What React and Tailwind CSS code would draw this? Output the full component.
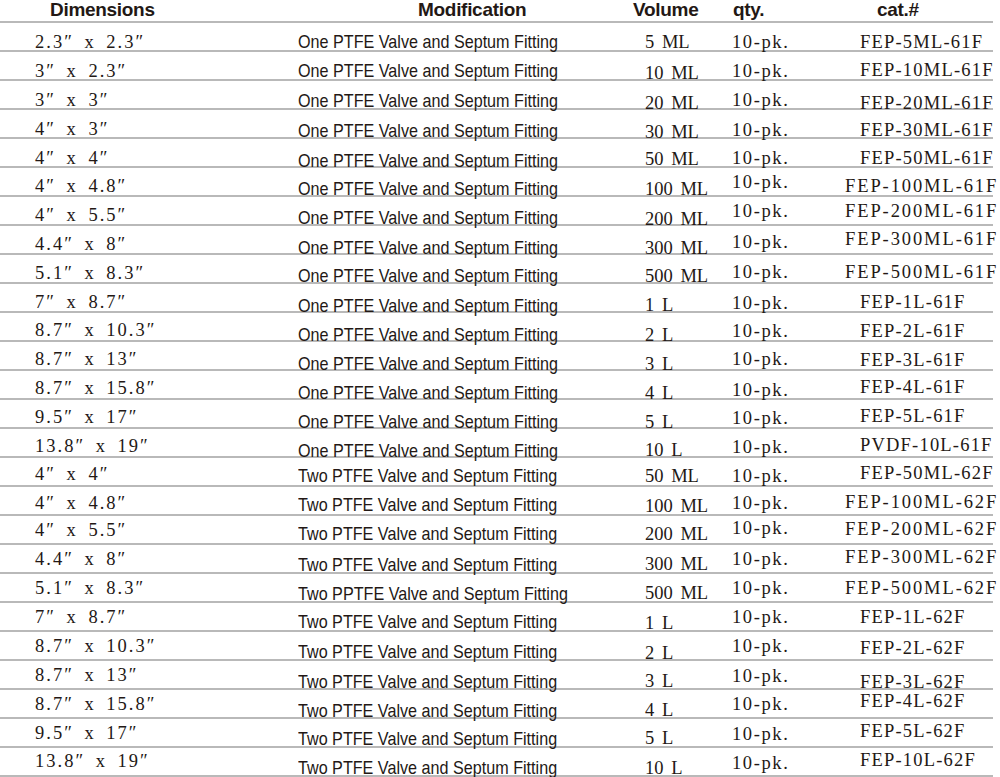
import React from 'react';

const ONE = 'One PTFE Valve and Septum Fitting';
const TWO = 'Two PTFE Valve and Septum Fitting';

// dims, modification, volume, cat#, [vertical centre offsets per column]
const rows = [
  ['2.3″ x 2.3″', ONE, '5 ML', 'FEP-5ML-61F', [17, 17, 17, 17, 17]],
  ['3″ x 2.3″', ONE, '10 ML', 'FEP-10ML-61F', [17, 17, 19, 17, 16]],
  ['3″ x 3″', ONE, '20 ML', 'FEP-20ML-61F', [17, 18, 20, 17, 20]],
  ['4″ x 3″', ONE, '30 ML', 'FEP-30ML-61F', [17, 19, 20, 18, 18]],
  ['4″ x 4″', ONE, '50 ML', 'FEP-50ML-61F', [17, 20, 18, 17, 17]],
  ['4″ x 4.8″', ONE, '100 ML', 'FEP-100ML-61F', [16, 19, 19, 12, 16]],
  ['4″ x 5.5″', ONE, '200 ML', 'FEP-200ML-61F', [16, 19, 20, 12, 12]],
  ['4.4″ x 8″', ONE, '300 ML', 'FEP-300ML-61F', [16, 20, 20, 14, 11]],
  ['5.1″ x 8.3″', ONE, '500 ML', 'FEP-500ML-61F', [16, 19, 19, 15, 15]],
  ['7″ x 8.7″', ONE, '1 L', 'FEP-1L-61F', [16, 20, 19, 17, 16]],
  ['8.7″ x 10.3″', ONE, '2 L', 'FEP-2L-61F', [15, 20, 20, 16, 16]],
  ['8.7″ x 13″', ONE, '3 L', 'FEP-3L-61F', [15, 20, 20, 15, 16]],
  ['8.7″ x 15.8″', ONE, '4 L', 'FEP-4L-61F', [15, 20, 20, 17, 14]],
  ['9.5″ x 17″', ONE, '5 L', 'FEP-5L-61F', [15, 20, 20, 16, 14]],
  ['13.8″ x 19″', ONE, '10 L', 'PVDF-10L-61F', [15, 20, 19, 16, 14]],
  ['4″ x 4″', TWO, '50 ML', 'FEP-50ML-62F', [14, 16, 16, 16, 13]],
  ['4″ x 4.8″', TWO, '100 ML', 'FEP-100ML-62F', [14, 16, 17, 14, 13]],
  ['4″ x 5.5″', TWO, '200 ML', 'FEP-200ML-62F', [12, 16, 16, 10, 11]],
  ['4.4″ x 8″', TWO, '300 ML', 'FEP-300ML-62F', [12, 18, 17, 12, 10]],
  ['5.1″ x 8.3″', 'Two PPTFE Valve and Septum Fitting', '500 ML', 'FEP-500ML-62F', [12, 18, 17, 12, 12]],
  ['7″ x 8.7″', TWO, '1 L', 'FEP-1L-62F', [12, 17, 18, 12, 12]],
  ['8.7″ x 10.3″', TWO, '2 L', 'FEP-2L-62F', [12, 18, 19, 12, 14]],
  ['8.7″ x 13″', TWO, '3 L', 'FEP-3L-62F', [12, 19, 18, 13, 19]],
  ['8.7″ x 15.8″', TWO, '4 L', 'FEP-4L-62F', [12, 19, 18, 12, 9]],
  ['9.5″ x 17″', TWO, '5 L', 'FEP-5L-62F', [12, 18, 17, 13, 10]],
  ['13.8″ x 19″', TWO, '10 L', 'FEP-10L-62F', [11, 18, 18, 13, 10]],
];

const MT = {
  9: '-mt-px',
  10: 'mt-0',
  11: 'mt-px',
  12: 'mt-[2px]',
  13: 'mt-[3px]',
  14: 'mt-1',
  15: 'mt-[5px]',
  16: 'mt-[6px]',
  17: 'mt-[7px]',
  18: 'mt-2',
  19: 'mt-[9px]',
  20: 'mt-[10px]',
};

const serif = "font-['Liberation_Serif','Times_New_Roman',serif] text-[18.5px] leading-[20px]";
const sans = "inline-block origin-left scale-x-[0.85] font-['Liberation_Sans',Arial,sans-serif] text-[19px] leading-[20px] whitespace-nowrap";

function Row({ row }) {
  const [dims, mod, vol, cat, off] = row;
  const long = cat.length > 12;
  return (
    <div className="flex h-[29px] w-[993px] items-start border-b-2 border-[#b9b9b9]">
      <div className={`w-[298px] shrink-0 pl-[35px] ${MT[off[0]]}`}>
        <span className={`${serif} tracking-[2px] [word-spacing:4px]`}>{dims}</span>
      </div>
      <div className={`w-[347px] shrink-0 ${MT[off[1]]}`}>
        <span className={sans}>{mod}</span>
      </div>
      <div className={`w-[87px] shrink-0 ${MT[off[2]]}`}>
        <span className={`${serif} [word-spacing:3px]`}>{vol}</span>
      </div>
      <div className={`w-[128px] shrink-0 ${MT[off[3]]}`}>
        <span className={`${serif} tracking-[1.6px]`}>10-pk.</span>
      </div>
      <div className={`whitespace-nowrap ${long ? '-ml-[15px]' : ''} ${MT[off[4]]}`}>
        <span className={`${serif} ${long ? 'tracking-[1.9px]' : 'tracking-[1.2px]'}`}>{cat}</span>
      </div>
    </div>
  );
}

export default function App() {
  return (
    <div className="h-[777px] w-[1000px] overflow-hidden bg-white text-[#231815]">
      <div className="flex h-[23px] w-[993px] items-start border-b-2 border-[#b9b9b9] font-['Liberation_Sans',Arial,sans-serif] text-[19px] font-bold leading-[20px] tracking-[-0.3px]">
        <div className="w-[418px] shrink-0 pl-[50px]">Dimensions</div>
        <div className="w-[215px] shrink-0">Modification</div>
        <div className="w-[100px] shrink-0">Volume</div>
        <div className="w-[144px] shrink-0">qty.</div>
        <div>cat.#</div>
      </div>
      {rows.map((row, i) => (
        <Row key={i} row={row} />
      ))}
    </div>
  );
}
